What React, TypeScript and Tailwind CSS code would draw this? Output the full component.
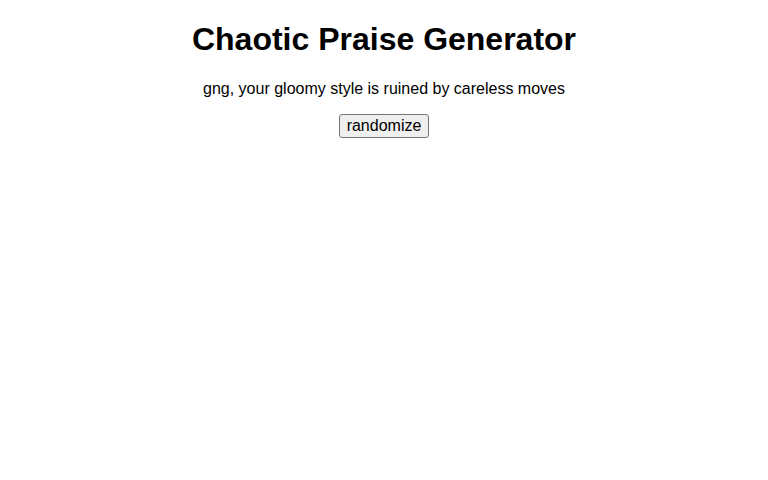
export default function App() {
  return (
    <div className="text-center text-black bg-white min-h-screen" style={{ fontFamily: '"Liberation Sans", Arial, sans-serif' }}>
      <div className="pt-[21.44px]">
        <h1 className="text-[32px] font-bold leading-[normal] mb-[21.44px]">Chaotic Praise Generator</h1>
        <p className="text-base leading-[normal] mb-4">gng, your gloomy style is ruined by careless moves</p>
        <button className="bg-[#efefef] border border-[#767676] rounded-[3px] px-[7px] py-[2px] text-base leading-[normal] text-black -mt-px">
          randomize
        </button>
      </div>
    </div>
  );
}
